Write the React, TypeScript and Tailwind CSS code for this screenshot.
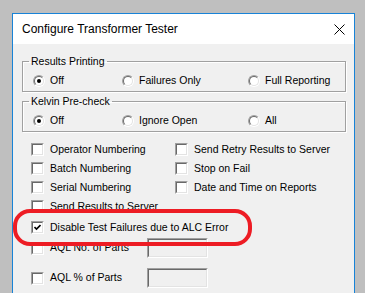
import React from "react";

const sans = { fontFamily: '"Liberation Sans", Arial, sans-serif' };

const Radio = ({ checked }: { checked?: boolean }) => (
  <div className="w-[12px] h-[12px] rounded-full border border-t-[#a0a0a0] border-l-[#a0a0a0] border-r-white border-b-white shrink-0">
    <div className="w-full h-full rounded-full border border-t-[#696969] border-l-[#696969] border-r-[#e3e3e3] border-b-[#e3e3e3] bg-white flex items-center justify-center">
      {checked && <div className="w-[4px] h-[4px] rounded-full bg-black" />}
    </div>
  </div>
);

const Check = ({ checked }: { checked?: boolean }) => (
  <div className="w-[13px] h-[13px] border border-t-[#a0a0a0] border-l-[#a0a0a0] border-r-white border-b-white shrink-0">
    <div className="w-full h-full border border-t-[#696969] border-l-[#696969] border-r-[#e3e3e3] border-b-[#e3e3e3] bg-white flex items-center justify-center">
      {checked && (
        <svg width="7" height="7" viewBox="0 0 7 7">
          <path d="M0.5 3 L2.5 5 L6.5 1" stroke="#000" strokeWidth="1.6" fill="none" />
        </svg>
      )}
    </div>
  </div>
);

const RadioItem = ({ label, checked, w }: { label: string; checked?: boolean; w: string }) => (
  <div className={`flex items-center gap-[5px] ${w}`}>
    <Radio checked={checked} />
    <span>{label}</span>
  </div>
);

const CheckItem = ({ label, checked, h = "h-[19px]" }: { label: string; checked?: boolean; h?: string }) => (
  <div className={`flex items-center gap-[6px] ${h}`}>
    <Check checked={checked} />
    <span>{label}</span>
  </div>
);

const Group = ({ title, options }: { title: string; options: string[] }) => (
  <fieldset className="border border-[#a0a0a0] shadow-[inset_1px_1px_0_#fff,1px_1px_0_#fff] h-[37px]">
    <legend className="ml-[6px] px-[2px] leading-[13px]">{title}</legend>
    <div className="flex items-center pl-[10px] pt-[5px]">
      <RadioItem label={options[0]} checked w="w-[89px]" />
      <RadioItem label={options[1]} w="w-[126px]" />
      <RadioItem label={options[2]} w="w-[90px]" />
    </div>
  </fieldset>
);

const TextBox = () => (
  <div className="w-[61px] h-[20px] border border-t-[#a0a0a0] border-l-[#a0a0a0] border-r-white border-b-white">
    <div className="w-full h-full border border-t-[#696969] border-l-[#696969] border-r-[#e3e3e3] border-b-[#e3e3e3] bg-[#f0f0f0]" />
  </div>
);

export default function App() {
  return (
    <div className="relative w-[365px] h-[293px] bg-[#bfbfbf] pt-[13px] pl-[12px] overflow-hidden text-[10.5px] text-black" style={sans}>
      <div className="w-[343px] h-[285px] border border-[#1883d7] bg-[#f0f0f0]">
        <div className="h-[30px] bg-white flex items-center justify-between pl-[9px] pr-[9px]">
          <span className="text-[12px] text-[#000]">Configure Transformer Tester</span>
          <svg width="11" height="11" viewBox="0 0 11 11">
            <path d="M0.5 0.5 L10.5 10.5 M10.5 0.5 L0.5 10.5" stroke="#000" strokeWidth="1" />
          </svg>
        </div>
        <div className="pl-[9px] pr-[8px] pt-[11px]">
          <Group title="Results Printing" options={["Off", "Failures Only", "Full Reporting"]} />
          <div className="mt-[3px]">
            <Group title="Kelvin Pre-check" options={["Off", "Ignore Open", "All"]} />
          </div>
          <div className="pl-[9px] pt-[8px] grid grid-cols-[144px_1fr]">
            <CheckItem label="Operator Numbering" />
            <CheckItem label="Send Retry Results to Server" />
            <CheckItem label="Batch Numbering" />
            <CheckItem label="Stop on Fail" />
            <CheckItem label="Serial Numbering" />
            <CheckItem label="Date and Time on Reports" />
            <CheckItem label="Send Results to Server" />
          </div>
          <div className="pl-[9px] pt-[2px]">
            <CheckItem label="Disable Test Failures due to ALC Error" checked />
            <div className="flex items-center h-[22px]">
              <div className="w-[116px]">
                <CheckItem label="AQL No. of Parts" />
              </div>
              <TextBox />
            </div>
            <div className="flex items-center h-[20px] mt-[9px]">
              <div className="w-[116px]">
                <CheckItem label="AQL % of Parts" />
              </div>
              <TextBox />
            </div>
          </div>
        </div>
      </div>
      <svg className="absolute left-0 top-0 pointer-events-none" width="365" height="293">
        <rect x="15" y="211" width="235" height="33" rx="15" fill="none" stroke="#ed1c24" strokeWidth="4" />
      </svg>
    </div>
  );
}
